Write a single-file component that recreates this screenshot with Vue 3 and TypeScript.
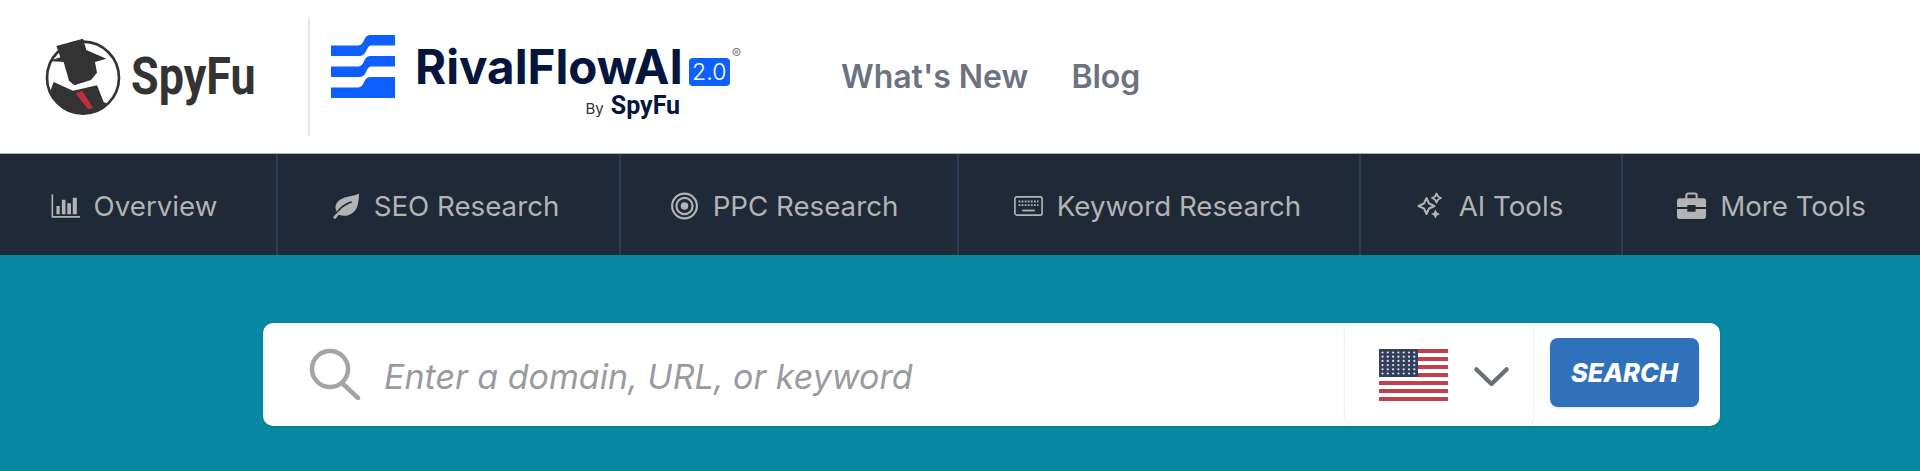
<script setup lang="ts">
const navItems: { label: string; icon: string }[] = [
  { label: 'Overview', icon: 'chart' },
  { label: 'SEO Research', icon: 'leaf' },
  { label: 'PPC Research', icon: 'target' },
  { label: 'Keyword Research', icon: 'keyboard' },
  { label: 'AI Tools', icon: 'sparkles' },
  { label: 'More Tools', icon: 'briefcase' },
]
</script>

<template>
  <div class="page">
    <header class="top">
      <div class="spyfu">
        <svg class="spy-icon" viewBox="16 26 228 234" aria-hidden="true">
          <circle cx="130" cy="145" r="108" fill="#fff" stroke="#333" stroke-width="8" />
          <path d="M32 185 L42 158 L100 184 L172 168 L192 218 L205 225 A108 108 0 0 1 32 190 Z" fill="#333" />
          <path d="M28 95 L62 84 L50 50 L130 28 L140 62 L200 88 L166 98 L172 130 L154 152 L104 168 L88 154 L72 98 Z" fill="#333" />
          <path d="M108 192 L128 185 L160 235 L145 240 Z" fill="#c0303c" />
        </svg>
        <span class="spy-word">SpyFu</span>
      </div>
      <div class="rule"></div>
      <div class="rival">
        <svg class="stripes" viewBox="0 0 64 63" aria-hidden="true">
          <path d="M64 0 V10.5 H40 C35 10.5 36 21 29 21 H0 V10.5 H27 C34 10.5 32 0 39 0 Z" fill="#0d5fff" />
          <path d="M64 21 V31.5 H40 C35 31.5 36 42 29 42 H0 V31.5 H27 C34 31.5 32 21 39 21 Z" fill="#0d5fff" />
          <path d="M64 42 V63 H0 V52.5 H27 C34 52.5 32 42 39 42 Z" fill="#0d5fff" />
        </svg>
        <div class="rival-text">
          <div class="rival-line">
            <span class="rival-word">RivalFlowAI</span>
            <span class="badge">2.0</span>
            <span class="reg">®</span>
          </div>
          <div class="by-line"><span class="by">By</span><span class="by-spy">SpyFu</span></div>
        </div>
      </div>
      <nav class="links">
        <a>What's New</a>
        <a>Blog</a>
      </nav>
    </header>

    <nav class="bar">
      <a v-for="item in navItems" :key="item.label" class="bar-item">
        <svg v-if="item.icon === 'chart'" class="ic" viewBox="0 0 32 28">
          <path d="M1.5 1 V26 H32" fill="none" stroke="currentColor" stroke-width="1.8" />
          <path d="M6 14h3.6v9H6zM12 7h4v16h-4zM18 11h4v12h-4zM24 5h4.5v18H24z" fill="currentColor" />
        </svg>
        <svg v-else-if="item.icon === 'leaf'" class="ic" viewBox="0 0 30 28">
          <path d="M29 1 C22 5 9 3 5 13 C4 16 5 18 6 20 C9 15 14 11 21 9 L22 10.5 C14 13 8 19 2 26 L4.5 27.5 L8 23 C15 26 24 23 27 15 C28.5 10 29 5 29 1 Z" fill="currentColor" />
        </svg>
        <svg v-else-if="item.icon === 'target'" class="ic" viewBox="0 0 26 26">
          <circle cx="13" cy="13" r="11.5" fill="none" stroke="currentColor" stroke-width="2" />
          <circle cx="13" cy="13" r="7.5" fill="none" stroke="currentColor" stroke-width="2" />
          <circle cx="13" cy="13" r="3.5" fill="currentColor" />
        </svg>
        <svg v-else-if="item.icon === 'keyboard'" class="ic" viewBox="0 0 32 24">
          <rect x="1" y="2" width="30" height="20" rx="2" fill="none" stroke="currentColor" stroke-width="1.8" />
          <path d="M5 7h22M5 11h22" stroke="currentColor" stroke-width="2" stroke-dasharray="2 1.4" />
          <path d="M9 17h14" stroke="currentColor" stroke-width="2" />
        </svg>
        <svg v-else-if="item.icon === 'sparkles'" class="ic" viewBox="0 0 28 28">
          <path d="M10 6 L12.5 11.5 L18 14 L12.5 16.5 L10 22 L7.5 16.5 L2 14 L7.5 11.5 Z" fill="none" stroke="currentColor" stroke-width="2" stroke-linejoin="round" />
          <path d="M20 1.5 L21.5 4.5 L24.5 6 L21.5 7.5 L20 10.5 L18.5 7.5 L15.5 6 L18.5 4.5 Z" fill="none" stroke="currentColor" stroke-width="1.8" stroke-linejoin="round" />
          <path d="M19 17.5 L20.5 20.5 L23.5 22 L20.5 23.5 L19 26.5 L17.5 23.5 L14.5 22 L17.5 20.5 Z" fill="currentColor" />
        </svg>
        <svg v-else class="ic" viewBox="0 0 28 26">
          <path d="M9 6 V3 A2 2 0 0 1 11 1 H17 A2 2 0 0 1 19 3 V6" fill="none" stroke="currentColor" stroke-width="2" />
          <path d="M0 8 A2.5 2.5 0 0 1 2.5 5.5 H25.5 A2.5 2.5 0 0 1 28 8 V14 H18 V12 H10 V14 H0 Z" fill="currentColor" />
          <path d="M0 16 H10 V18.5 H18 V16 H28 V23 A2.5 2.5 0 0 1 25.5 25.5 H2.5 A2.5 2.5 0 0 1 0 23 Z" fill="currentColor" />
        </svg>
        <span>{{ item.label }}</span>
      </a>
    </nav>

    <main class="hero">
      <form class="search" @submit.prevent>
        <svg class="glass" viewBox="0 0 52 52" aria-hidden="true">
          <circle cx="21" cy="21" r="18" fill="none" stroke="currentColor" stroke-width="4.5" />
          <path d="M33 35 L49 50" fill="none" stroke="currentColor" stroke-width="4.5" stroke-linecap="round" />
        </svg>
        <span class="placeholder">Enter a domain, URL, or keyword</span>
        <div class="country">
          <svg class="flag" viewBox="0 0 69 52" aria-hidden="true">
            <rect width="69" height="52" fill="#fff" />
            <path d="M0 2h69M0 10h69M0 18h69M0 26h69M0 34h69M0 42h69M0 50h69" stroke="#c2404c" stroke-width="4" />
            <rect width="39" height="28" fill="#333f5c" />
            <g fill="#dfe3ea">
              <circle v-for="n in 42" :key="n" :cx="3.5 + ((n - 1) % 7) * 5.3" :cy="3.5 + Math.floor((n - 1) / 7) * 4.2" r="1.1" />
            </g>
          </svg>
          <svg class="chev" viewBox="0 0 35 20" aria-hidden="true">
            <path d="M2.5 2.5 L17.5 17 L32.5 2.5" fill="none" stroke="#6b7078" stroke-width="4.5" stroke-linecap="round" stroke-linejoin="round" />
          </svg>
        </div>
        <button class="go" type="submit">SEARCH</button>
      </form>
    </main>
  </div>
</template>

<style>
html, body { margin: 0; background: #fff; }
</style>

<style scoped>
.page {
  height: 471px;
  display: flex;
  flex-direction: column;
  font-family: Inter, "Liberation Sans", sans-serif;
  overflow: hidden;
}
.top {
  height: 153px;
  flex: none;
  display: flex;
  align-items: center;
  background: #fff;
  padding-left: 45px;
}
.spyfu { display: flex; align-items: center; gap: 10px; width: 263px; }
.spy-icon { width: 76px; height: 78px; flex: none; }
.spy-word {
  display: inline-block;
  font-family: Roboto, sans-serif;
  font-weight: 700;
  font-size: 51px;
  line-height: 60px;
  color: #333;
  transform: scaleX(0.88);
  transform-origin: left center;
}
.rule { width: 2px; height: 119px; background: #e5e7eb; flex: none; }
.rival { display: flex; align-items: flex-start; margin-left: 21px; width: 510px; }
.stripes { width: 64px; height: 63px; flex: none; }
.rival-text { margin-left: 20px; }
.rival-line { display: flex; align-items: flex-start; height: 58px; }
.rival-word {
  font-weight: 700;
  font-size: 47.5px;
  line-height: 52px;
  margin-top: 6px;
  color: #04153e;
}
.badge {
  margin: 23px 0 0 6px;
  background: #0d5fff;
  color: #fff;
  border-radius: 4px;
  width: 41px;
  height: 28px;
  text-align: center;
  font-size: 23px;
  line-height: 28px;
  font-weight: 300;
}
.reg { font-size: 14px; line-height: 14px; color: #777; margin: 12px 0 0 2px; }
.by-line { display: flex; align-items: baseline; justify-content: flex-end; gap: 7px; padding-right: 61px; }
.by { font-size: 15px; color: #333; }
.by-spy { font-family: Roboto, sans-serif; font-weight: 700; font-size: 25px; color: #04153e; line-height: 26px; }
.links { display: flex; gap: 43px; }
.links a { font-size: 32px; font-weight: 600; color: #6b7280; }
.bar {
  height: 102px;
  flex: none;
  display: grid;
  grid-template-columns: 278px 343px 338px 402px 262px 297px;
  background: #1f2937;
  border-top: 1px solid #aab0b6;
  box-sizing: border-box;
}
.bar-item {
  display: flex;
  align-items: center;
  justify-content: center;
  gap: 14px;
  color: #b3b3b3;
  font-size: 27.7px;
  border-right: 2px solid #2f3b55;
  padding: 2px 3px 0 0;
  box-sizing: border-box;
}
.bar-item:nth-child(1) { padding-right: 8px; }
.bar-item:nth-child(2) { padding-right: 7px; }
.bar-item:nth-child(3) { padding-right: 10px; }
.bar-item:last-child { border-right: 0; padding-right: 0; }
.ic { width: 29px; height: 28px; flex: none; }
.hero {
  flex: 1;
  background: #0889a3;
  padding: 68px 200px 0 263px;
  box-sizing: border-box;
}
.search {
  width: 1457px;
  height: 103px;
  background: #fff;
  border-radius: 10px;
  display: flex;
  align-items: center;
  box-shadow: 0 1px 3px rgba(0, 0, 0, 0.15);
}
.glass { width: 52px; height: 52px; margin: -2px 0 0 46px; color: #a3a3a8; flex: none; }
.placeholder {
  margin-left: 23px;
  padding-top: 4px;
  font-size: 34px;
  font-style: italic;
  color: #9a9ba1;
  flex: 1;
}
.country {
  width: 188px;
  height: 103px;
  flex: none;
  display: flex;
  align-items: center;
  box-sizing: border-box;
  padding-left: 34px;
  gap: 26px;
  box-shadow: 0 0 3px rgba(100, 116, 139, 0.25);
  border-radius: 8px;
}
.flag { width: 69px; height: 52px; flex: none; }
.chev { width: 35px; height: 20px; flex: none; margin-top: 5px; }
.go {
  width: 149px;
  height: 69px;
  margin: -4px 21px 0 17px;
  flex: none;
  border: 0;
  border-radius: 8px;
  background: #2f72bb;
  color: #fff;
  font-family: Inter, sans-serif;
  font-size: 25.5px;
  font-weight: 800;
  font-style: italic;
  box-shadow: 0 1px 3px rgba(0, 0, 0, 0.12);
}
</style>
